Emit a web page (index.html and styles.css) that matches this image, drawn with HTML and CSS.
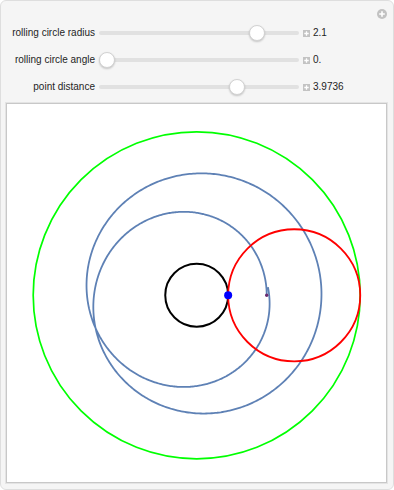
FILE: index.html
```html
<!DOCTYPE html>
<html lang="en">

<head>
    <meta charset="UTF-8">
    <meta name="viewport" content="width=device-width, initial-scale=1.0">
    <title>Rolling Circle</title>

    <link rel="stylesheet" href="styles.css">
</head>

<body>
    <div class="panel">
        <div class="top-bar">
            <svg class="more" width="10" height="10" viewBox="0 0 10 10">
                <circle cx="5" cy="5" r="5" fill="#c2c2c2" />
                <path d="M5 2.2v5.6M2.2 5h5.6" stroke="#fff" stroke-width="1.6" />
            </svg>
        </div>

        <div class="controls">
            <div class="row">
                <label class="label">rolling circle radius</label>
                <input type="range" class="slider" min="0.1" max="2.55" step="0.01" value="2.1">
                <svg class="plus" width="7" height="7" viewBox="0 0 7 7">
                    <rect width="7" height="7" fill="#c3c3c3" />
                    <path d="M3.5 1.3v4.4M1.3 3.5h4.4" stroke="#fff" stroke-width="1.3" />
                </svg>
                <span class="value">2.1</span>
            </div>
            <div class="row">
                <label class="label">rolling circle angle</label>
                <input type="range" class="slider" min="0" max="6.28" step="0.01" value="0">
                <svg class="plus" width="7" height="7" viewBox="0 0 7 7">
                    <rect width="7" height="7" fill="#c3c3c3" />
                    <path d="M3.5 1.3v4.4M1.3 3.5h4.4" stroke="#fff" stroke-width="1.3" />
                </svg>
                <span class="value">0.</span>
            </div>
            <div class="row">
                <label class="label">point distance</label>
                <input type="range" class="slider" min="0" max="5.64" step="0.0001" value="3.9736">
                <svg class="plus" width="7" height="7" viewBox="0 0 7 7">
                    <rect width="7" height="7" fill="#c3c3c3" />
                    <path d="M3.5 1.3v4.4M1.3 3.5h4.4" stroke="#fff" stroke-width="1.3" />
                </svg>
                <span class="value">3.9736</span>
            </div>
        </div>

        <div class="plot">
            <svg width="379" height="378" viewBox="-189.7 -191.3 379 378">
                <circle class="outer" cx="0" cy="0" r="163.5" />
                <polyline class="trace" points="" />
                <circle class="fixed" cx="0" cy="0" r="31.45" />
                <circle class="rolling" cx="97.5" cy="0" r="66.05" />
                <circle class="contact" cx="31.45" cy="0" r="4" />
                <circle class="pen" cx="70" cy="0" r="1.7" />
            </svg>
        </div>
    </div>

    <script>
        /* epitrochoid traced by the pen, fixed circle radius 1 */
        var unit = 31.45;
        var R = 1, r = 2.1;
        var d = 3.9736 - (R + r);
        var pts = [];
        for (var i = 0; i <= 900; i++) {
            var t = 4 * Math.PI * i / 900;
            var k = (R + r) / r;
            var x = (R + r) * Math.cos(t) - d * Math.cos(k * t);
            var y = (R + r) * Math.sin(t) - d * Math.sin(k * t);
            pts.push((x * unit).toFixed(2) + "," + (-y * unit).toFixed(2));
        }
        document.querySelector('.trace').setAttribute('points', pts.join(' '));
    </script>
</body>

</html>
```

FILE: styles.css
```css
body {
    margin: 0;
    font-family: 'Liberation Sans', Arial, Helvetica, sans-serif;
    font-size: 10px;
    color: #1e1e1e;
}

.panel {
    width: 392px;
    height: 480px;
    border: 1px solid #dedede;
    border-radius: 6px;
    background: #f5f5f5;
    padding-top: 8px;
}

.top-bar {
    height: 10px;
    display: flex;
    justify-content: flex-end;
    padding-right: 6px;
}

.more {
    display: block;
}

.row {
    height: 27px;
    display: flex;
    align-items: center;
}

.label {
    width: 94px;
    text-align: right;
}

.slider {
    -webkit-appearance: none;
    appearance: none;
    width: 200px;
    height: 16px;
    margin: 0 0 0 4px;
    padding: 0;
    background: transparent;
}

.slider::-webkit-slider-runnable-track {
    height: 4px;
    border-radius: 2px;
    background: #e1e1e1;
}

.slider::-webkit-slider-thumb {
    -webkit-appearance: none;
    width: 16px;
    height: 16px;
    margin-top: -6px;
    border-radius: 50%;
    background: #fff;
    border: 1px solid #d2d2d2;
    box-sizing: border-box;
    box-shadow: 0 1px 2px rgba(0, 0, 0, 0.2);
}

.plus {
    display: block;
    margin: 2px 0 0 4px;
}

.value {
    margin-left: 3px;
}

.plot {
    width: 379px;
    height: 378px;
    margin: 3px 0 0 5px;
    border: 1px solid #c8c8c8;
    box-shadow: 0 0 0 1px #e4e4e4;
    background: #fff;
}

.plot svg {
    display: block;
}

.outer {
    fill: none;
    stroke: #00ff00;
    stroke-width: 1.7;
}

.trace {
    fill: none;
    stroke: #5e81b5;
    stroke-width: 1.8;
}

.fixed {
    fill: none;
    stroke: #000;
    stroke-width: 2;
}

.rolling {
    fill: none;
    stroke: #ff0000;
    stroke-width: 1.8;
}

.contact {
    fill: #0000ff;
}

.pen {
    fill: #6a2c70;
}
```
